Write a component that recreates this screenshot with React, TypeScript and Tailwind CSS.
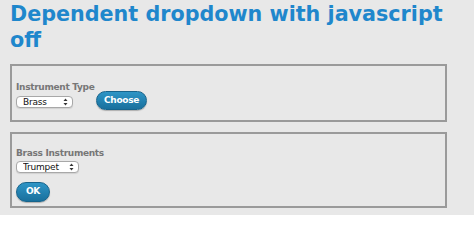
import React from 'react';

const font = { fontFamily: '"DejaVu Sans", Verdana, sans-serif' };

const Arrows = () => (
  <svg width="5" height="8" viewBox="0 0 5 8" className="pointer-events-none absolute right-[5px] top-[2px]">
    <path d="M2.5 0.5 L4.5 3 H0.5 Z" fill="#333" />
    <path d="M2.5 7.5 L4.5 5 H0.5 Z" fill="#333" />
  </svg>
);

const Select: React.FC<{ options: string[]; width: string }> = ({ options, width }) => (
  <div className={`relative h-[12px] ${width}`}>
    <select
      className="block h-[12px] w-full appearance-none rounded-[4px] border border-[#a8a8a8] bg-white py-0 pl-[6px] text-[9px] leading-[10px] tracking-[-0.2px] text-[#111] shadow-[0_1px_1px_rgba(0,0,0,0.1)] outline-none"
      style={font}
      defaultValue={options[0]}
    >
      {options.map((o) => (
        <option key={o}>{o}</option>
      ))}
    </select>
    <Arrows />
  </div>
);

const PillButton: React.FC<{ label: string; className: string }> = ({ label, className }) => (
  <button
    className={`flex items-center justify-center rounded-full border border-[#17648c] bg-gradient-to-b from-[#2e95c6] to-[#19709d] text-[9px] font-bold tracking-[-0.3px] text-white shadow-[0_1px_1px_rgba(0,0,0,0.25)] ${className}`}
    style={font}
  >
    {label}
  </button>
);

export default function App() {
  return (
    <div className="h-[215px] w-[474px] overflow-hidden bg-[#e8e8e8] pl-[10px]" style={font}>
      <h1 className="w-[450px] pt-[1px] text-[20.7px] font-bold leading-[26px] text-[#1f87cc]">
        Dependent dropdown with javascript off
      </h1>

      <div className="mt-[11px] flex h-[58px] w-[437px] flex-col border-2 border-[#9a9a9a] pl-[4px] pt-[16px]">
        <label className="text-[9px] font-bold leading-[10px] tracking-[-0.3px] text-[#777]">Instrument Type</label>
        <div className="-mt-[1px] flex items-end">
          <div className="mb-[2px]">
            <Select options={['Brass', 'Woodwind', 'Strings']} width="w-[57px]" />
          </div>
          <PillButton label="Choose" className="ml-[23px] h-[19px] w-[51px]" />
        </div>
      </div>

      <div className="mt-[10px] flex h-[76px] w-[437px] flex-col border-2 border-[#9a9a9a] pl-[4px] pt-[14px]">
        <label className="text-[9px] font-bold leading-[10px] tracking-[-0.3px] text-[#777]">Brass Instruments</label>
        <div className="mt-[3px]">
          <Select options={['Trumpet', 'Trombone', 'Tuba']} width="w-[63px]" />
        </div>
        <PillButton label="OK" className="mt-[9px] h-[20px] w-[34px]" />
      </div>
    </div>
  );
}
